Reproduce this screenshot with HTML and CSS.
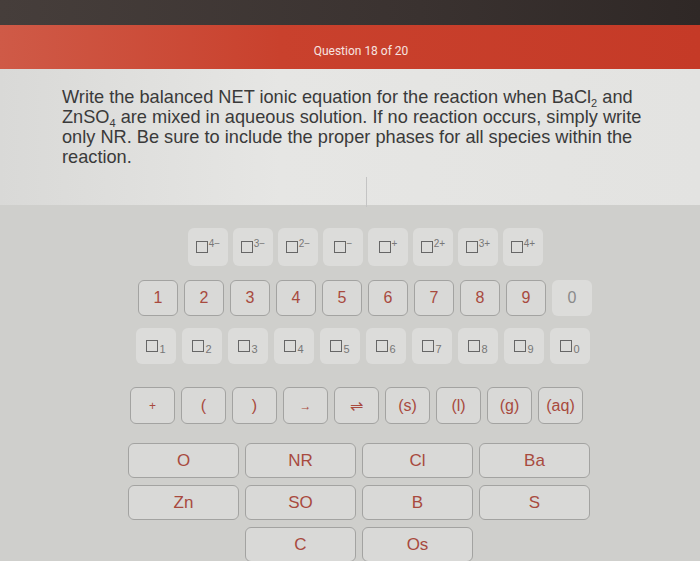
FILE: index.html
```html
<!DOCTYPE html>
<html>
<head>
<meta charset="utf-8">
<link rel="stylesheet" href="styles.css">
</head>
<body>
<div class="topbar"></div>
<header class="header">Question 18 of 20</header>
<main class="content">
  <p class="prompt">Write the balanced NET ionic equation for the reaction when BaCl<sub>2</sub> and<br>ZnSO<sub>4</sub> are mixed in aqueous solution. If no reaction occurs, simply write<br>only NR. Be sure to include the proper phases for all species within the<br>reaction.</p>
  <div class="answer"><span class="cursor"></span></div>
</main>
<section class="keypad">
  <div class="row charges">
    <div class="key soft"><span class="box"></span><sup>4−</sup></div>
    <div class="key soft"><span class="box"></span><sup>3−</sup></div>
    <div class="key soft"><span class="box"></span><sup>2−</sup></div>
    <div class="key soft"><span class="box"></span><sup>−</sup></div>
    <div class="key soft"><span class="box"></span><sup>+</sup></div>
    <div class="key soft"><span class="box"></span><sup>2+</sup></div>
    <div class="key soft"><span class="box"></span><sup>3+</sup></div>
    <div class="key soft"><span class="box"></span><sup>4+</sup></div>
  </div>
  <div class="row digits">
    <div class="key btn">1</div>
    <div class="key btn">2</div>
    <div class="key btn">3</div>
    <div class="key btn">4</div>
    <div class="key btn">5</div>
    <div class="key btn">6</div>
    <div class="key btn">7</div>
    <div class="key btn">8</div>
    <div class="key btn">9</div>
    <div class="key soft zero">0</div>
  </div>
  <div class="row subs">
    <div class="key soft"><span class="box"></span><sub>1</sub></div>
    <div class="key soft"><span class="box"></span><sub>2</sub></div>
    <div class="key soft"><span class="box"></span><sub>3</sub></div>
    <div class="key soft"><span class="box"></span><sub>4</sub></div>
    <div class="key soft"><span class="box"></span><sub>5</sub></div>
    <div class="key soft"><span class="box"></span><sub>6</sub></div>
    <div class="key soft"><span class="box"></span><sub>7</sub></div>
    <div class="key soft"><span class="box"></span><sub>8</sub></div>
    <div class="key soft"><span class="box"></span><sub>9</sub></div>
    <div class="key soft"><span class="box"></span><sub>0</sub></div>
  </div>
  <div class="row symbols">
    <div class="key btn small">+</div>
    <div class="key btn">(</div>
    <div class="key btn">)</div>
    <div class="key btn small">→</div>
    <div class="key btn">⇌</div>
    <div class="key btn">(s)</div>
    <div class="key btn">(l)</div>
    <div class="key btn">(g)</div>
    <div class="key btn">(aq)</div>
  </div>
  <div class="elements">
    <div class="key btn">O</div>
    <div class="key btn">NR</div>
    <div class="key btn">Cl</div>
    <div class="key btn">Ba</div>
    <div class="key btn">Zn</div>
    <div class="key btn">SO</div>
    <div class="key btn">B</div>
    <div class="key btn">S</div>
    <div class="key btn blank"></div>
    <div class="key btn">C</div>
    <div class="key btn">Os</div>
  </div>
</section>
</body>
</html>
```
FILE: styles.css
```css
html, body {
  margin: 0;
  padding: 0;
}
body {
  width: 700px;
  height: 561px;
  overflow: hidden;
  background: #cfcfcc;
  font-family: "Liberation Sans", Arial, sans-serif;
}
.topbar {
  height: 25px;
  background: linear-gradient(90deg, #463e3b, #3a3230 60%, #2f2826);
}
.header {
  height: 44px;
  background: linear-gradient(90deg, #cf5a47, #c9412d 40%, #c53a27);
  color: #f6e4e0;
  font-family: Roboto, "Liberation Sans", sans-serif;
  font-size: 12px;
  display: flex;
  align-items: center;
  justify-content: center;
  padding: 8px 0 0 22px;
  box-sizing: border-box;
}
.content {
  box-sizing: border-box;
  background: linear-gradient(90deg, #d9d9d7, #e6e6e4 40%, #e3e3e1);
  padding: 18px 20px 0 62px;
  height: 136px;
}
.prompt {
  margin: 0;
  font-size: 18.2px;
  line-height: 20px;
  color: #3a3a3a;
  white-space: nowrap;
}
.prompt sub {
  font-size: 11px;
  line-height: 0;
  vertical-align: -4px;
}
.answer {
  position: relative;
  height: 30px;
}
.cursor {
  position: absolute;
  left: 304px;
  top: 10px;
  width: 1px;
  height: 30px;
  background: #c4c4c4;
}
.keypad {
  padding: 23px 0 0 128px;
  display: flex;
  flex-direction: column;
  align-items: flex-start;
}
.row {
  display: flex;
}
.key {
  box-sizing: border-box;
  display: flex;
  align-items: center;
  justify-content: center;
  border-radius: 6px;
  color: #a84a3e;
}
.soft {
  background: #dcdcda;
  color: #777;
}
.btn {
  background: #d9d9d7;
  border: 1px solid #a3a3a1;
}
.charges {
  margin-left: 60px;
  gap: 5px;
}
.charges .key {
  width: 40px;
  height: 38px;
}
.box {
  display: inline-block;
  width: 12px;
  height: 12px;
  border: 1px solid #666;
  box-sizing: border-box;
}
.charges sup {
  font-size: 10px;
  align-self: flex-start;
  margin-top: 10px;
  margin-left: 1px;
}
.digits {
  margin-top: 14px;
  margin-left: 10px;
  gap: 6px;
}
.digits .key {
  width: 40px;
  height: 36px;
  font-size: 16px;
}
.zero {
  color: #8a8a8a;
}
.subs {
  margin-top: 12px;
  margin-left: 8px;
  gap: 6px;
}
.subs .key {
  width: 40px;
  height: 36px;
}
.subs sub {
  font-size: 11px;
  align-self: flex-end;
  margin-bottom: 9px;
  margin-left: 1px;
}
.symbols {
  margin-top: 23px;
  margin-left: 2px;
  gap: 6px;
}
.symbols .key {
  width: 45px;
  height: 37px;
  font-size: 16px;
}
.symbols .small {
  font-size: 12px;
}
.elements {
  margin-top: 19px;
  display: grid;
  grid-template-columns: repeat(4, 111px);
  gap: 7px 6px;
}
.elements .key {
  height: 35px;
  font-size: 17px;
}
.elements .blank {
  visibility: hidden;
}
```
